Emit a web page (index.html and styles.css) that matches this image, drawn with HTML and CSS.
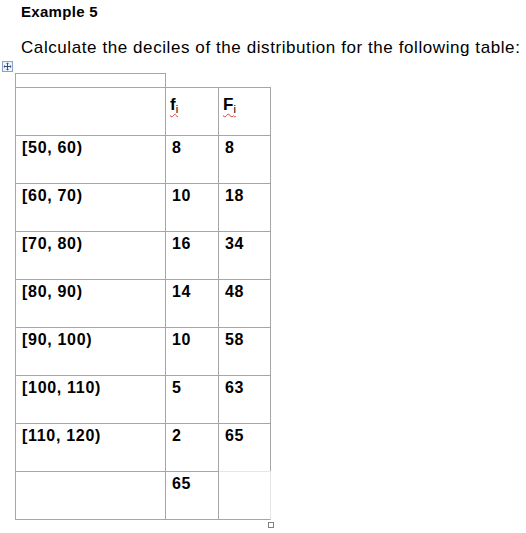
FILE: index.html
```html
<!DOCTYPE html>
<html>
<head>
<meta charset="utf-8">
<link rel="stylesheet" href="styles.css">
</head>
<body>
<div class="page">
  <h1 class="title">Example 5</h1>
  <p class="intro">Calculate the deciles of the distribution for the following table:</p>
  <div class="table-wrap">
    <div class="move-handle">
      <svg width="11" height="11" viewBox="0 0 11 11">
        <rect x="0.5" y="0.5" width="10" height="10" fill="#eef3fa" stroke="#8aa4c8"/>
        <path d="M5.5 2v7M2 5.5h7" stroke="#2f4f80" stroke-width="1"/>
        <path d="M5.5 1.5l-1.5 1.5h3zM5.5 9.5l-1.5-1.5h3zM1.5 5.5l1.5-1.5v3zM9.5 5.5l-1.5-1.5v3z" fill="#2f4f80"/>
      </svg>
    </div>
    <div class="orphan"></div>
    <div class="grid">
      <div class="cell"></div>
      <div class="cell head"><span class="sp">f<sub>i</sub></span></div>
      <div class="cell head"><span class="sp">F<sub>i</sub></span></div>

      <div class="cell">[50, 60)</div><div class="cell">8</div><div class="cell">8</div>
      <div class="cell">[60, 70)</div><div class="cell">10</div><div class="cell">18</div>
      <div class="cell">[70, 80)</div><div class="cell">16</div><div class="cell">34</div>
      <div class="cell">[80, 90)</div><div class="cell">14</div><div class="cell">48</div>
      <div class="cell">[90, 100)</div><div class="cell">10</div><div class="cell">58</div>
      <div class="cell">[100, 110)</div><div class="cell">5</div><div class="cell">63</div>
      <div class="cell">[110, 120)</div><div class="cell">2</div><div class="cell">65</div>
      <div class="cell"></div><div class="cell">65</div><div class="cell ghost"></div>
    </div>
    <div class="resize-handle"></div>
  </div>
</div>
</body>
</html>
```
FILE: styles.css
```css
html, body {
  margin: 0;
  padding: 0;
  background: #ffffff;
}
body {
  font-family: "Liberation Sans", Arial, sans-serif;
  color: #000;
}
.page {
  position: relative;
  width: 526px;
  height: 533px;
  overflow: hidden;
}
.title {
  margin: 0;
  padding: 4px 0 0 21px;
  font-size: 15px;
  font-weight: bold;
  line-height: 16px;
  letter-spacing: 0.3px;
}
.intro {
  margin: 0;
  padding: 18px 0 0 21px;
  font-size: 17px;
  line-height: 19px;
  letter-spacing: 0.58px;
  white-space: nowrap;
}
.table-wrap {
  position: relative;
  margin-top: 1px;
  padding-left: 15px;
  padding-top: 15px;
}
.move-handle {
  position: absolute;
  left: 2px;
  top: 3px;
  width: 11px;
  height: 11px;
  line-height: 0;
}
.orphan {
  width: 149px;
  height: 13px;
  border: 1px solid #a6a6a6;
  border-bottom: none;
}
.grid {
  display: grid;
  grid-template-columns: 150px 53px 52px;
  grid-auto-rows: 48px;
  width: 255px;
  border-top: 1px solid #a6a6a6;
  border-left: 1px solid #a6a6a6;
}
.cell {
  box-sizing: border-box;
  border-right: 1px solid #a6a6a6;
  border-bottom: 1px solid #a6a6a6;
  padding: 3px 0 0 6px;
  font-size: 16px;
  font-weight: bold;
  line-height: 18px;
  letter-spacing: 0.7px;
}
.cell.head {
  padding-top: 8px;
  padding-left: 4px;
}
.cell.ghost {
  border-right-color: #e6e6e6;
  border-top: 1px solid #e6e6e6;
  margin-top: -1px;
  height: 49px;
}
.sp {
  text-decoration: underline wavy #d04040;
  text-decoration-thickness: 1px;
  text-underline-offset: 3px;
  font-size: 17px;
  letter-spacing: 0;
}
.sp sub {
  font-size: 11px;
  font-weight: normal;
  vertical-align: -3px;
  line-height: 0;
}
.resize-handle {
  position: absolute;
  left: 268px;
  top: 464px;
  width: 4px;
  height: 4px;
  border: 1px solid #808080;
  background: #fff;
}
```
